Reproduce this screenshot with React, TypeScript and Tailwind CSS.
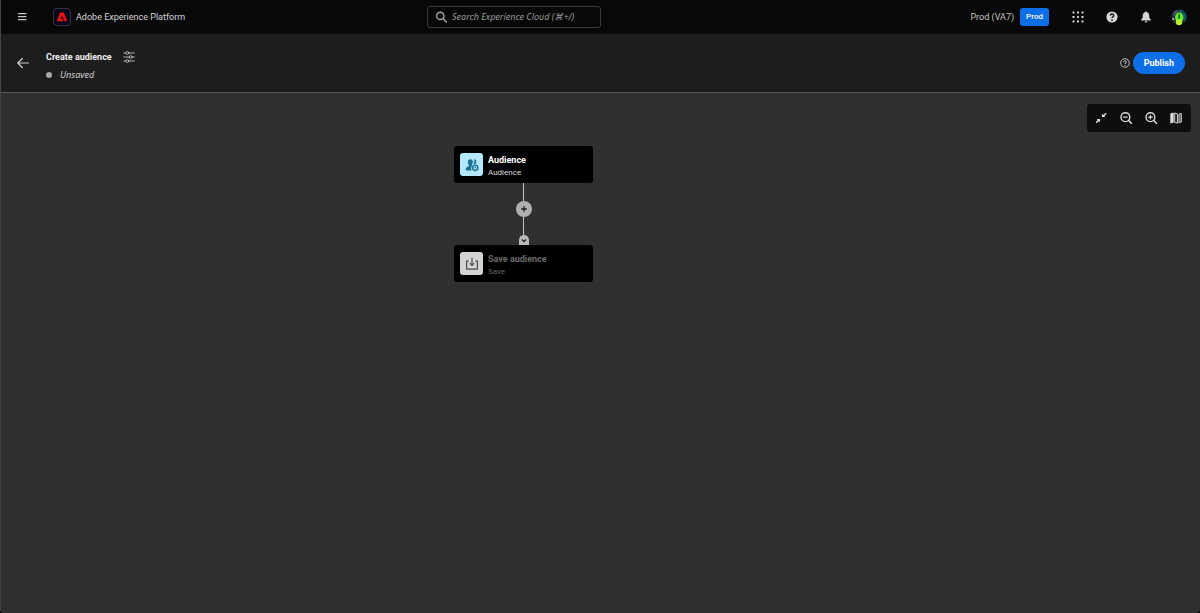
import React from "react";

/* ---------------- ICONS ---------------- */
const AdobeLogo = () => (
  <svg viewBox="0 0 18 18" className="size-[18px]" aria-hidden="true">
    <rect x="0.5" y="0.5" width="17" height="17" rx="3.5" fill="#04071c" stroke="#3c3444" />
    <path d="M7.2 4.4h3.6l3.5 8.9h-2.8L9 7.3l-1.4 3.4h1.9l1 2.6H3.7z" fill="#fa0f0c" />
  </svg>
);

const MenuIcon = () => (
  <svg viewBox="0 0 10 10" className="size-[10px]" fill="#c8c8c8" aria-hidden="true">
    <rect x="1" y="1" width="8.5" height="1.3" rx="0.5" />
    <rect x="1" y="4" width="8.5" height="1.3" rx="0.5" />
    <rect x="1" y="7" width="8.5" height="1.3" rx="0.5" />
  </svg>
);

const SearchIcon = () => (
  <svg viewBox="0 0 12 12" className="size-3" fill="none" stroke="#a8a8a8" strokeWidth="1.4" strokeLinecap="round" aria-hidden="true">
    <circle cx="4.3" cy="4.9" r="3.6" />
    <path d="M7.2 7.8l3.1 3.1" />
  </svg>
);

const AppsIcon = () => (
  <svg viewBox="0 0 12 12" className="size-3" fill="#dcdcdc" aria-hidden="true">
    {[0.5, 5, 9.5].map((y) =>
      [0.5, 5, 9.5].map((x) => (
        <rect key={`${x}-${y}`} x={x} y={y} width="2" height="2" rx="0.4" />
      ))
    )}
  </svg>
);

const HelpIcon = () => (
  <svg viewBox="0 0 12 12" className="size-3" aria-hidden="true">
    <circle cx="6" cy="6" r="5.6" fill="#d6d6d6" />
    <path d="M4.3 4.6c.1-2.2 3.5-2.1 3.5-.1C7.8 5.8 6 5.8 6 7.2" fill="none" stroke="#111" strokeWidth="1.3" />
    <circle cx="6" cy="9.1" r="0.85" fill="#111" />
  </svg>
);

const BellIcon = () => (
  <svg viewBox="0 0 12 12" className="size-3" fill="#d6d6d6" aria-hidden="true">
    <path d="M6 .4c.6 0 1 .4 1 .9 1.5.4 2.200 1.600 2.200 3.100 0 2.400.6 3.400 1.500 4.200.4.4.2 1-.3 1H1.600c-.5 0-.7-.6-.3-1 .9-.8 1.500-1.800 1.500-4.200C2.800 2.900 3.500 1.700 5 1.300c0-.5.4-.9 1-.9z" />
    <path d="M4.700 10.300h2.600c0 .8-.6 1.300-1.300 1.300s-1.300-.5-1.300-1.300z" />
  </svg>
);

const AvatarIcon = () => (
  <svg viewBox="0 0 16 17" className="h-[17px] w-4" aria-hidden="true">
    <circle cx="8" cy="8" r="7.6" fill="#24363c" />
    <path d="M8 .4a7.6 7.6 0 0 1 5 13.2L11.500 8 8 4z" fill="#12575c" />
    <path d="M1.500 5.500A7.600 7.600 0 0 1 6 .8L7 3 3 7z" fill="#4f4a66" />
    <rect x="1.500" y="9" width="1.500" height="2" fill="#c9a9d8" />
    <ellipse cx="8.200" cy="8.500" rx="4.200" ry="5" fill="#63e62a" />
    <path d="M5 10.500h6v3.500c0 3-6 3-6 0z" fill="#b8f22c" />
    <path d="M7.200 5.300h1.800v4.500H7.200z" fill="#1d7430" />
  </svg>
);

const BackIcon = () => (
  <svg viewBox="0 0 12 12" className="size-3" fill="none" stroke="#d0d0d0" strokeWidth="1.2" strokeLinecap="round" strokeLinejoin="round" aria-hidden="true">
    <path d="M11.500 6H0.800M5.300 1.500L0.800 6l4.500 4.500" />
  </svg>
);

const PropertiesIcon = () => (
  <svg viewBox="0 0 12 12" className="size-3" fill="none" stroke="#c4c4c4" strokeWidth="0.9" strokeLinecap="round" aria-hidden="true">
    <path d="M.8 2h2M6 2h5.300M.8 6h5.300M9.300 6h2M.8 10h2M6 10h5.300" />
    <circle cx="4.400" cy="2" r="1.400" />
    <circle cx="7.700" cy="6" r="1.400" />
    <circle cx="4.400" cy="10" r="1.400" />
  </svg>
);

const HelpOutlineIcon = () => (
  <svg viewBox="0 0 10 10" className="size-[10px]" fill="none" stroke="#d0d0d0" aria-hidden="true">
    <circle cx="5" cy="5" r="4.300" strokeWidth="0.9" />
    <path d="M3.700 4c.1-1.600 2.600-1.500 2.600-.1C6.300 4.900 5 4.900 5 6" strokeWidth="1" />
    <circle cx="5" cy="7.300" r="0.600" fill="#d0d0d0" stroke="none" />
  </svg>
);

const CollapseIcon = () => (
  <svg viewBox="0 0 12 12" className="size-3" fill="#dcdcdc" aria-hidden="true">
    <path d="M6.900 1.800v3.300h3.500L9.300 4.100l2.300-2.300-.9-1L8.200 3.100z" />
    <path d="M5 10.400V7H1.600l1.100 1.100L.6 10.200l1 1 2.200-2z" />
  </svg>
);

const ZoomIcon = ({ plus = false }: { plus?: boolean }) => (
  <svg viewBox="0 0 12 12" className="size-3" fill="none" stroke="#dcdcdc" strokeWidth="1.4" strokeLinecap="round" aria-hidden="true">
    <circle cx="5.400" cy="5.200" r="4.400" />
    <path d="M8.700 8.500l2.700 2.800" strokeWidth="1.6" />
    <path d={plus ? "M3.600 5.200H7.200M5.400 3.400V7" : "M3.600 5.200H7.200"} strokeWidth="1.2" />
  </svg>
);

const MapIcon = () => (
  <svg viewBox="0 0 12 12" className="size-3" aria-hidden="true">
    <path d="M.3 1.500l3.400-.9v9.800l-3.400 1z" fill="#dcdcdc" />
    <path d="M4.700 1l2.700.9v9.300l-2.700-.8z" fill="none" stroke="#dcdcdc" />
    <path d="M8.900 2l2.500-.6v8.700l-2.500.7z" fill="#6c6c6c" stroke="#c8c8c8" strokeWidth="0.9" />
  </svg>
);

const AudienceIcon = () => (
  <svg viewBox="0 0 14 14" className="size-[14px]" fill="#176f96" aria-hidden="true">
    <path d="M9 1.300c1.600.1 2.300 1.200 2.300 2.600 0 .8-.3 1.500-.7 2.100-.8 0-1.400.1-2 .5.7-1.300 1.100-3.300.4-5.200z" />
    <path d="M5.300 1.300c1.700 0 2.600 1.200 2.600 2.700 0 1.100-.5 2.100-1 2.700-.3.500-.2.900.2 1.100-1 1.100-1.300 3-.6 4.800H.9c-.2-2.700.3-3.500 2.500-4.300.7-.3.8-.9.400-1.400-.6-.7-1-1.700-1-2.800 0-1.600.8-2.800 2.500-2.800z" />
    <circle cx="10.200" cy="9.800" r="2.600" fill="none" stroke="#176f96" strokeWidth="1.500" />
    <circle cx="10.200" cy="9.800" r="0.800" />
  </svg>
);

const SaveIcon = () => (
  <svg viewBox="0 0 14 14" className="size-[14px]" fill="none" stroke="#4c4c4c" strokeWidth="1.2" aria-hidden="true">
    <path d="M3.900 4H1.600v8.200h10.800V4h-2.300" />
    <path d="M7 .8v7M4.800 6.200L7 8.500l2.200-2.300" />
  </svg>
);

/* ---------------- TOP BAR ---------------- */
const TopBar = () => (
  <header className="flex h-[34px] items-center bg-[#080808] pr-[13px]">
    <div className="flex w-[426px] shrink-0 items-center pl-4">
      <button aria-label="Menu">
        <MenuIcon />
      </button>
      <a href="#" className="ml-[26px] flex items-center gap-[5px] text-[9px] leading-3 text-[#d5d5d5]">
        <AdobeLogo />
        Adobe Experience Platform
      </a>
    </div>

    <label className="flex h-[22px] w-[174px] items-center gap-1 rounded-[3px] border border-[#3a3a3a] pl-2">
      <SearchIcon />
      <input
        type="search"
        aria-label="Search Experience Cloud"
        placeholder="Search Experience Cloud (⌘+/)"
        className="min-w-0 flex-1 bg-transparent font-['Noto_Sans',sans-serif] text-[9px] leading-3 italic text-[#d5d5d5] outline-none placeholder:text-[#999999]"
      />
    </label>

    <div className="ml-auto flex items-center">
      <span className="text-[9px] leading-3 text-[#c4c4c4]">Prod (VA7)</span>
      <span className="ml-[6px] flex h-[18px] items-center rounded-[3px] bg-[#0d6fe8] px-[6px] text-[8px] leading-3 font-medium text-white">
        Prod
      </span>
      <div className="ml-[23px] flex items-center gap-[22px]">
        <button aria-label="Apps">
          <AppsIcon />
        </button>
        <button aria-label="Help">
          <HelpIcon />
        </button>
        <button aria-label="Notifications">
          <BellIcon />
        </button>
        <button aria-label="Account" className="-ml-[3px]">
          <AvatarIcon />
        </button>
      </div>
    </div>
  </header>
);

/* ---------------- PAGE HEADER ---------------- */
const PageHeader = () => (
  <section className="flex h-[59px] items-center border-b border-[#5a5a5a] bg-[#1d1d1d] pr-[15px] pl-4">
    <button aria-label="Back">
      <BackIcon />
    </button>
    <div className="ml-[17px] pt-[6px]">
      <div className="flex items-center gap-[11px]">
        <h1 className="text-[9px] leading-[18px] font-bold text-[#efefef]">Create audience</h1>
        <button aria-label="Properties">
          <PropertiesIcon />
        </button>
      </div>
      <p className="flex items-center gap-2 font-['Noto_Sans',sans-serif] text-[9px] leading-[18px] italic text-[#d0d0d0]">
        <span className="size-[6px] rounded-full bg-[#a8a8a8]" />
        Unsaved
      </p>
    </div>
    <div className="ml-auto flex items-center gap-[3px]">
      <button aria-label="About publishing">
        <HelpOutlineIcon />
      </button>
      <button className="h-[22px] rounded-full bg-[#0d6fe8] px-[11px] text-[9px] leading-3 font-bold text-white">
        Publish
      </button>
    </div>
  </section>
);

/* ---------------- CANVAS ---------------- */
type NodeProps = {
  title: string;
  subtitle: string;
  icon: React.ReactNode;
  disabled?: boolean;
};

const FlowNode = ({ title, subtitle, icon, disabled }: NodeProps) => (
  <button
    disabled={disabled}
    className="flex h-[37px] w-[139px] items-center gap-[5px] rounded-[3px] bg-black pl-[6px] text-left"
  >
    <span
      className={`flex size-[23px] items-center justify-center rounded-[3px] ${
        disabled ? "bg-[#d4d4d4]" : "bg-[#b4e8fc]"
      }`}
    >
      {icon}
    </span>
    <span className="pt-[3px]">
      <span
        className={`block text-[9px] leading-[13px] font-bold ${
          disabled ? "text-[#6a6a6a]" : "text-white"
        }`}
      >
        {title}
      </span>
      <span className={`block text-[8px] leading-3 ${disabled ? "text-[#666666]" : "text-[#dcdcdc]"}`}>
        {subtitle}
      </span>
    </span>
  </button>
);

const Connector = () => (
  <div className="flex flex-col items-center">
    <span className="h-[18px] w-px bg-[#c4c4c4]" />
    <button aria-label="Add activity">
      <svg viewBox="0 0 16 16" className="size-4" aria-hidden="true">
        <circle cx="8" cy="8" r="8" fill="#b0b0b0" />
        <path d="M8 5.200v5.600M5.200 8h5.600" stroke="#1c1c1c" strokeWidth="1.3" />
      </svg>
    </button>
    <span className="h-[18px] w-px bg-[#c4c4c4]" />
    <svg viewBox="0 0 10 10" className="size-[10px]" aria-hidden="true">
      <path d="M0 10V5a5 5 0 0 1 10 0v5z" fill="#b8b8b8" />
      <path d="M2.800 4.500L5 6.700l2.200-2.200" fill="none" stroke="#1c1c1c" strokeWidth="1.3" />
    </svg>
  </div>
);

const CanvasToolbar = () => (
  <div className="absolute top-[11px] right-[9px] flex h-7 items-center gap-[13px] rounded-[3px] bg-[#0e0e0e] pr-[9px] pl-2">
    <button aria-label="Fit to screen">
      <CollapseIcon />
    </button>
    <button aria-label="Zoom out">
      <ZoomIcon />
    </button>
    <button aria-label="Zoom in">
      <ZoomIcon plus />
    </button>
    <button aria-label="Show map">
      <MapIcon />
    </button>
  </div>
);

const App: React.FC = () => {
  return (
    <div className="flex min-h-screen flex-col bg-black font-[Roboto,sans-serif]">
      <div className="flex flex-1 flex-col overflow-hidden rounded-b border-l border-[#444444] bg-[#303030]">
        <TopBar />
        <PageHeader />
        <main className="relative flex-1">
          <CanvasToolbar />
          <div className="absolute top-[53px] left-[453px] flex flex-col items-center">
            <FlowNode title="Audience" subtitle="Audience" icon={<AudienceIcon />} />
            <Connector />
            <FlowNode title="Save audience" subtitle="Save" icon={<SaveIcon />} disabled />
          </div>
        </main>
      </div>
    </div>
  );
};

export default App;
